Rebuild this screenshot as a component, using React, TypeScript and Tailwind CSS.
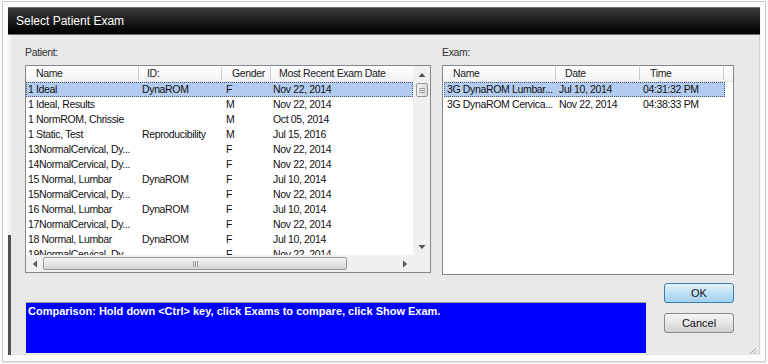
import React from "react";

type Col = { label: string; w: number; hp: string; dp: string };

const patientCols: Col[] = [
  { label: "Name", w: 113, hp: "pl-[10px]", dp: "pl-[2px]" },
  { label: "ID:", w: 83, hp: "pl-[8px]", dp: "pl-[3px]" },
  { label: "Gender", w: 49, hp: "pl-[10px]", dp: "pl-[4px]" },
  { label: "Most Recent Exam Date", w: 160, hp: "pl-[8px]", dp: "pl-[2px]" },
];

const examCols: Col[] = [
  { label: "Name", w: 113, hp: "pl-[10px]", dp: "pl-[3px]" },
  { label: "Date", w: 84, hp: "pl-[9px]", dp: "pl-[2px]" },
  { label: "Time", w: 84, hp: "pl-[10px]", dp: "pl-[2px]" },
];

const patients = [
  ["1 Ideal", "DynaROM", "F", "Nov 22, 2014"],
  ["1 Ideal, Results", "", "M", "Nov 22, 2014"],
  ["1 NormROM, Chrissie", "", "M", "Oct 05, 2014"],
  ["1 Static, Test", "Reproducibility", "M", "Jul 15, 2016"],
  ["13NormalCervical, Dy...", "", "F", "Nov 22, 2014"],
  ["14NormalCervical, Dy...", "", "F", "Nov 22, 2014"],
  ["15 Normal, Lumbar", "DynaROM", "F", "Jul 10, 2014"],
  ["15NormalCervical, Dy...", "", "F", "Nov 22, 2014"],
  ["16 Normal, Lumbar", "DynaROM", "F", "Jul 10, 2014"],
  ["17NormalCervical, Dy...", "", "F", "Nov 22, 2014"],
  ["18 Normal, Lumbar", "DynaROM", "F", "Jul 10, 2014"],
  ["19NormalCervical, Dy...", "", "F", "Nov 22, 2014"],
];

const exams = [
  ["3G DynaROM Lumbar...", "Jul 10, 2014", "04:31:32 PM"],
  ["3G DynaROM Cervica...", "Nov 22, 2014", "04:38:33 PM"],
];

const Arrow = ({ dir }: { dir: "up" | "down" | "left" | "right" }) => {
  const pts = {
    up: "0.5,5 4,1 7.5,5",
    down: "0.5,1 4,5 7.5,1",
    left: "5,0.5 1,4 5,7.5",
    right: "1,0.5 5,4 1,7.5",
  }[dir];
  const vert = dir === "up" || dir === "down";
  return (
    <svg width={vert ? 8 : 6} height={vert ? 6 : 8} viewBox={vert ? "0 0 8 6" : "0 0 6 8"}>
      <polygon points={pts} fill="#505050" />
    </svg>
  );
};

const Header = ({ cols }: { cols: Col[] }) => (
  <div className="flex h-[16px] shrink-0 bg-gradient-to-b from-white to-[#f2f3f5] border-b border-[#e2e3e5] text-[#222]">
    {cols.map((c) => (
      <div key={c.label} style={{ width: c.w }} className="flex items-center shrink-0">
        <span className={`flex-1 whitespace-nowrap ${c.hp}`}>{c.label}</span>
        <div className="w-px h-[13px] bg-[#c9ccd1]" />
      </div>
    ))}
  </div>
);

const Row = ({ cols, cells, selected }: { cols: Col[]; cells: string[]; selected?: boolean }) => (
  <div
    className={`flex h-[15px] shrink-0 items-center text-[#111] ${
      selected ? "bg-[#b3cbee] outline-1 outline-dotted outline-[#4a5a70] -outline-offset-1" : ""
    }`}
  >
    {cols.map((c, i) => (
      <div key={c.label} style={{ width: c.w }} className={`shrink-0 whitespace-nowrap overflow-hidden ${c.dp}`}>
        {cells[i]}
      </div>
    ))}
  </div>
);

const PatientList = () => (
  <div className="w-[406px] h-[208px] border border-[#828790] bg-white flex flex-col">
    <div className="flex h-[189px]">
      <div className="w-[387px] flex flex-col overflow-hidden">
        <Header cols={patientCols} />
        {patients.map((p, i) => (
          <Row key={i} cols={patientCols} cells={p} selected={i === 0} />
        ))}
      </div>
      <div className="w-[17px] bg-[#f0f0f0] flex flex-col items-center">
        <div className="h-[17px] flex items-center justify-center">
          <Arrow dir="up" />
        </div>
        <div className="w-[12px] h-[14px] rounded-[2px] border border-[#979797] bg-gradient-to-r from-[#f4f4f4] to-[#dadada] flex flex-col items-center justify-center gap-[1px]">
          <div className="w-[6px] h-px bg-[#9a9a9a]" />
          <div className="w-[6px] h-px bg-[#9a9a9a]" />
          <div className="w-[6px] h-px bg-[#9a9a9a]" />
        </div>
        <div className="mt-auto h-[17px] flex items-center justify-center">
          <Arrow dir="down" />
        </div>
      </div>
    </div>
    <div className="flex h-[17px] bg-[#f0f0f0] items-center">
      <div className="w-[17px] flex items-center justify-center">
        <Arrow dir="left" />
      </div>
      <div className="w-[304px] h-[13px] rounded-[2px] border border-[#979797] bg-gradient-to-b from-[#f4f4f4] to-[#d6d6d6] flex items-center justify-center gap-[1px]">
        <div className="w-px h-[6px] bg-[#9a9a9a]" />
        <div className="w-px h-[6px] bg-[#9a9a9a]" />
        <div className="w-px h-[6px] bg-[#9a9a9a]" />
      </div>
      <div className="ml-auto w-[17px] mr-[17px] flex items-center justify-center">
        <Arrow dir="right" />
      </div>
    </div>
  </div>
);

const ExamList = () => (
  <div className="w-[292px] h-[210px] border border-[#828790] bg-white flex flex-col overflow-hidden">
    <Header cols={examCols} />
    <div className="pl-px">
      {exams.map((e, i) => (
        <div key={i} className="w-[281px]">
          <Row cols={examCols} cells={e} selected={i === 0} />
        </div>
      ))}
    </div>
  </div>
);

const App = () => (
  <div className="w-[768px] h-[364px] bg-white pt-px pl-[2px] font-['Liberation_Sans',Arial,sans-serif] text-[10.5px] tracking-[-0.35px] overflow-hidden">
    <div className="w-[764px] h-[361px] border border-[#cdcdcd] bg-[#fbfbfb] shadow-[0_1px_2px_rgba(0,0,0,0.15)] pl-[5px] pt-[5px]">
      <div className="w-[752px] h-[348px] flex flex-col">
        <div className="h-[28px] shrink-0 bg-gradient-to-b from-[#3c3c3c] via-[#1c1c1c] to-[#020202] border-t border-b border-[#6e6e6e] flex items-center pl-[8px] text-white text-[12px] tracking-normal">
          Select Patient Exam
        </div>
        <div className="flex-1 flex bg-[#e9e9e9] border-r border-[#d2d2d2]">
          <div className="w-[3px] flex flex-col bg-[#f4f4f4]">
            <div className="mt-auto h-[120px] bg-[#4c5151]" />
          </div>
          <div className="flex-1 flex flex-col">
            <div className="flex">
              <div className="ml-[14px] flex flex-col">
                <div className="h-[30px] pt-[10px] text-[#333] leading-[14px]">Patient:</div>
                <PatientList />
              </div>
              <div className="ml-[11px] flex flex-col">
                <div className="h-[30px] pt-[10px] text-[#333] leading-[14px]">Exam:</div>
                <ExamList />
              </div>
            </div>
            <div className="flex items-start">
              <div className="ml-[15px] mt-[27px] w-[620px] h-[51px] bg-[#0000ff] border-t border-[#9a9aa8] text-white font-bold text-[11px] tracking-normal pl-[2px] pt-[2px] leading-[12px]">
                Comparison: Hold down &lt;Ctrl&gt; key, click Exams to compare, click Show Exam.
              </div>
              <div className="ml-[18px] mt-[8px] flex flex-col gap-[10px] tracking-normal text-[11px]">
                <div className="w-[70px] h-[20px] rounded-[3px] border border-[#3c7fb1] bg-gradient-to-b from-[#e6f4fc] via-[#bfe0f4] to-[#a2cfee] flex items-center justify-center text-[#111]">
                  OK
                </div>
                <div className="w-[70px] h-[20px] rounded-[3px] border border-[#8a8a8a] bg-gradient-to-b from-[#f4f4f4] via-[#e6e6e6] to-[#cfcfcf] flex items-center justify-center text-[#111]">
                  Cancel
                </div>
              </div>
              <div className="ml-auto mt-[72px] mr-[2px]">
                <svg width="8" height="8" viewBox="0 0 8 8">
                  <path d="M7 1 L1 7 M7 4 L4 7 M7 6.5 L6.5 7" stroke="#a8a8a8" strokeWidth="1" />
                </svg>
              </div>
            </div>
          </div>
        </div>
      </div>
    </div>
  </div>
);

export default App;
